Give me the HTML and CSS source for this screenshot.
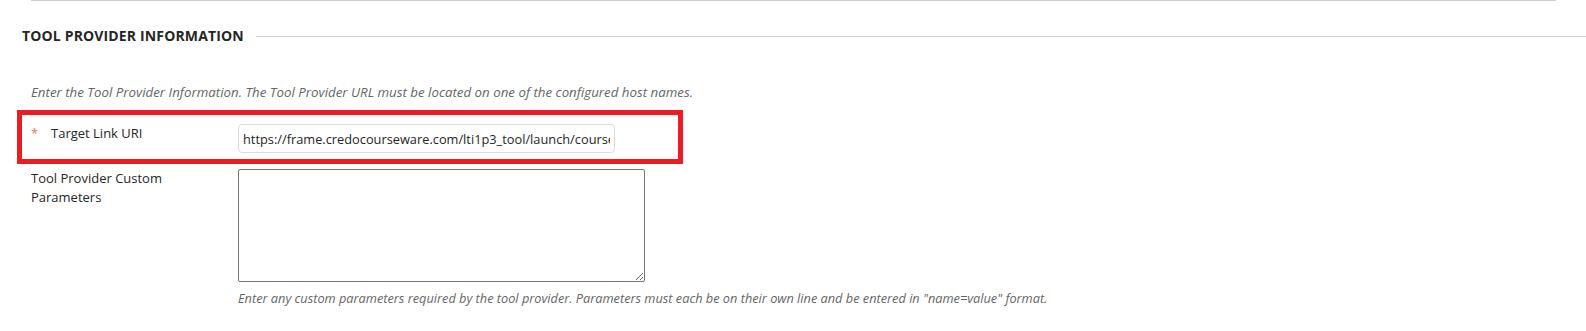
FILE: index.html
```html
<!DOCTYPE html>
<html lang="en">
<head>
    <meta charset="UTF-8">
    <meta name="viewport" content="width=device-width, initial-scale=1.0">
    <title>Tool Provider Information</title>
    <link rel="stylesheet" href="styles.css">
</head>
<body>

<div class="page">
    <hr class="top-rule">

    <section class="step">
        <div class="step-title">
            <h2>Tool Provider Information</h2>
            <span class="step-rule"></span>
        </div>

        <p class="step-intro">Enter the Tool Provider Information. The Tool Provider URL must be located on one of the configured host names.</p>

        <ol class="fields">
            <!-- Required field, marked with the red annotation box -->
            <li class="field-row marked">
                <div class="label-cell">
                    <span class="req">*</span><label for="target-uri">Target Link URI</label>
                </div>
                <div class="field-cell">
                    <input id="target-uri" class="text-input" type="text" value="https://frame.credocourseware.com/lti1p3_tool/launch/course">
                </div>
            </li>

            <li class="field-row">
                <div class="label-cell">
                    <label for="custom-params" class="wrap-label">Tool Provider Custom Parameters</label>
                </div>
                <div class="field-cell">
                    <textarea id="custom-params" class="text-area"></textarea>
                    <p class="field-help">Enter any custom parameters required by the tool provider. Parameters must each be on their own line and be entered in "name=value" format.</p>
                </div>
            </li>
        </ol>
    </section>
</div>

</body>
</html>
```

FILE: styles.css
```css
:root {
    --text-color: #262626;
    --help-color: #666666;
    --rule-color: #cdcdcd;
    --mark-color: #ed1c24;
    --req-color: #f0774b;
    --font-family: "Open Sans", "Noto Sans", Arial, sans-serif;
}

body {
    margin: 0;
    font-family: var(--font-family);
    color: var(--text-color);
    background: #ffffff;
}

.top-rule {
    margin: 0 30px 0 31px;
    height: 0;
    border: 0;
    border-top: 1px solid var(--rule-color);
}

.step-title {
    display: flex;
    align-items: center;
    margin-top: 25px;
    padding-left: 22px;
}

.step-title h2 {
    margin: 0;
    font-size: 14px;
    line-height: 20px;
    font-weight: 700;
    text-transform: uppercase;
    letter-spacing: 0.15px;
}

.step-rule {
    flex: 1;
    margin-left: 12px;
    border-top: 1px solid var(--rule-color);
}

.step-intro {
    margin: 37px 0 0 31px;
    font-size: 13.3px;
    line-height: 18px;
    font-style: italic;
    color: var(--help-color);
}

.fields {
    list-style: none;
    margin: 9px 0 0;
    padding: 0;
}

.field-row {
    display: flex;
    padding-left: 31px;
    margin-top: 5px;
}

.field-row.marked {
    box-sizing: border-box;
    width: 666px;
    margin: 0 0 0 17px;
    padding: 9px 0 6px 9px;
    border: 5px solid var(--mark-color);
}

.label-cell {
    width: 207px;
    flex-shrink: 0;
    font-size: 13px;
    line-height: 19px;
}

.req {
    display: inline-block;
    width: 20px;
    color: var(--req-color);
}

.wrap-label {
    display: block;
    max-width: 150px;
}

.text-input {
    box-sizing: border-box;
    width: 377px;
    height: 29px;
    padding: 0 4px;
    border: 1px solid #dcdcdc;
    border-radius: 4px;
    font-family: var(--font-family);
    font-size: 12.8px;
    color: var(--text-color);
}

.text-area {
    display: block;
    box-sizing: border-box;
    width: 407px;
    height: 113px;
    margin: 0;
    border: 1px solid #767676;
    border-radius: 2px;
    font-family: var(--font-family);
}

.field-help {
    margin: 7px 0 0;
    font-size: 12.75px;
    line-height: 18px;
    font-style: italic;
    color: var(--help-color);
}
```
